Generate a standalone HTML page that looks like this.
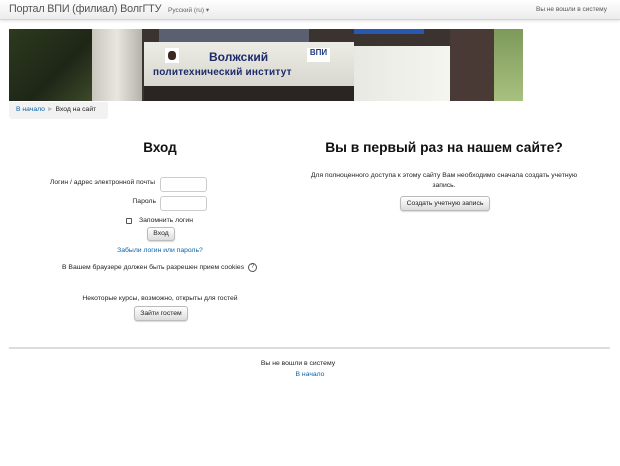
<!DOCTYPE html>
<html><head><meta charset="utf-8"><style>
*{margin:0;padding:0;box-sizing:border-box}
body{width:620px;height:466px;background:#fff;font-family:"Liberation Sans",sans-serif;color:#333;position:relative;overflow:hidden}
.a{position:absolute;white-space:nowrap}
.s{font-size:6.8px;color:#222}
.btn{position:absolute;border:1px solid #bbb;border-radius:3px;background:linear-gradient(#fff,#dcdcdc);font-size:6.8px;color:#222;text-align:center;box-shadow:0 1px 1px rgba(0,0,0,.15)}
.inp{position:absolute;border:1px solid #ccc;border-radius:3px;background:#fff;width:47px;height:15px}
.lk{color:#0a62a8}
</style></head><body>
<div class="a" style="left:0;top:0;width:620px;height:20px;background:linear-gradient(#fff,#ececec);border-bottom:1px solid #d4d4d4;box-shadow:0 1px 3px rgba(0,0,0,.12)"></div>
<div class="a" style="left:9px;top:3px;font-size:10.8px;color:#555;letter-spacing:-0.2px">Портал ВПИ (филиал) ВолгГТУ</div>
<div class="a" style="left:168px;top:6px;font-size:6.5px;color:#666">Русский (ru) ▾</div>
<div class="a" style="left:536px;top:6px;font-size:6.5px;color:#555">Вы не вошли в систему</div>

<div class="a" style="left:9px;top:29px;width:514px;height:72px;background:#3a3330;overflow:hidden">
 <div class="a" style="left:0;top:0;width:83px;height:72px;background:linear-gradient(135deg,#2d3a1e,#1e2616 60%,#3c4a2a)"></div>
 <div class="a" style="left:83px;top:0;width:50px;height:72px;background:linear-gradient(90deg,#c9c6bd,#e8e6df,#b5b2aa)"></div>
 <div class="a" style="left:150px;top:0;width:150px;height:13px;background:#5a6070"></div>
 <div class="a" style="left:135px;top:13px;width:210px;height:44px;background:linear-gradient(#ecece6,#d8d7cf)"></div>
 <div class="a" style="left:135px;top:57px;width:210px;height:15px;background:#2a2522"></div>
 <div class="a" style="left:345px;top:0;width:70px;height:5px;background:#2858b0"></div>
 <div class="a" style="left:345px;top:17px;width:96px;height:55px;background:linear-gradient(90deg,#e9e9e3,#f5f5f0)"></div>
 <div class="a" style="left:441px;top:0;width:44px;height:72px;background:#4a3a35"></div>
 <div class="a" style="left:485px;top:0;width:29px;height:72px;background:linear-gradient(#7d9a5a,#a8c080)"></div>
 <div class="a" style="left:156px;top:19px;width:14px;height:15px;background:#fff"><div style="margin:3px;width:8px;height:9px;background:#3a2a20;border-radius:40%"></div></div>
 <div class="a" style="left:298px;top:19px;width:23px;height:14px;background:#fff;color:#1e3a80;font-size:8px;font-weight:bold;text-align:center">ВПИ</div>
 <div class="a" style="left:200px;top:21px;font-size:12px;font-weight:900;color:#1c2a6a">Волжский</div>
 <div class="a" style="left:144px;top:38px;font-size:10px;font-weight:900;color:#1c2a6a;letter-spacing:.2px">политехнический институт</div>
</div>

<div class="a" style="left:9px;top:102px;width:99px;height:17px;background:#f2f2f2;border-radius:0 0 3px 3px"></div>
<div class="a s" style="left:16px;top:106px"><span class="lk">В начало</span> <span style="color:#bbb">►</span> Вход на сайт</div>

<div class="a" style="left:100px;top:140px;width:120px;text-align:center;font-size:13.5px;font-weight:bold;color:#111">Вход</div>
<div class="a s" style="right:465px;top:179px">Логин / адрес электронной почты</div>
<div class="inp" style="left:160px;top:177px"></div>
<div class="a s" style="right:464px;top:198px">Пароль</div>
<div class="inp" style="left:160px;top:196px"></div>
<div class="a" style="left:126px;top:218px;width:6px;height:6px;border:1px solid #555;border-radius:1px"></div>
<div class="a s" style="left:139px;top:217px">Запомнить логин</div>
<div class="btn" style="left:147px;top:227px;width:28px;height:14px;line-height:12px">Вход</div>
<div class="a s lk" style="left:80px;top:247px;width:160px;text-align:center;color:#0a62a8">Забыли логин или пароль?</div>
<div class="a s" style="left:62px;top:264px">В Вашем браузере должен быть разрешен прием cookies</div>
<div class="a" style="left:248px;top:263px;width:9px;height:9px;border:1px solid #555;border-radius:50%;font-size:6px;text-align:center;line-height:7px;color:#444">?</div>
<div class="a s" style="left:60px;top:295px;width:200px;text-align:center">Некоторые курсы, возможно, открыты для гостей</div>
<div class="btn" style="left:134px;top:306px;width:54px;height:15px;line-height:13px">Зайти гостем</div>

<div class="a" style="left:300px;top:140px;width:288px;text-align:center;font-size:13.8px;font-weight:bold;color:#111">Вы в первый раз на нашем сайте?</div>
<div class="a s" style="left:300px;top:171px;width:288px;text-align:center;white-space:normal;line-height:10px">Для полноценного доступа к этому сайту Вам необходимо сначала создать учетную запись.</div>
<div class="btn" style="left:400px;top:196px;width:90px;height:15px;line-height:13px">Создать учетную запись</div>

<div class="a" style="left:9px;top:347px;width:601px;height:2px;background:#ddd"></div>
<div class="a s" style="left:0;top:360px;width:596px;text-align:center">Вы не вошли в систему</div>
<div class="a s" style="left:0;top:371px;width:620px;text-align:center;color:#0a62a8">В начало</div>
</body></html>
